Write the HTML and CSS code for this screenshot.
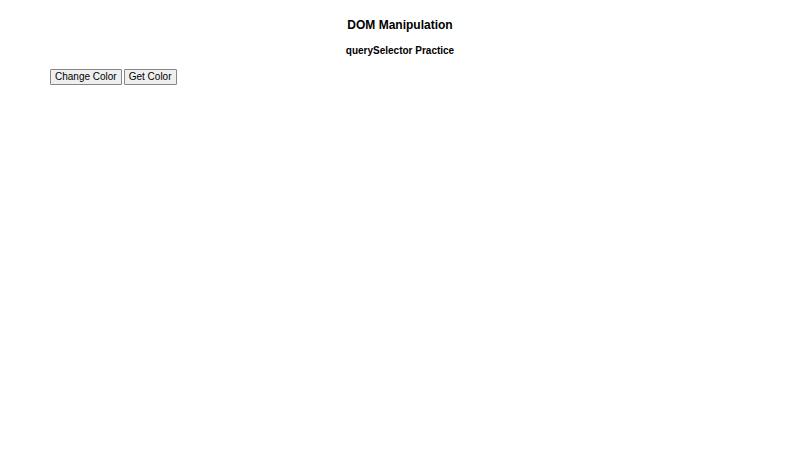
FILE: index.html
```html
<!DOCTYPE html>
<html lang="en">
<head>
    <meta charset="UTF-8">
    <meta name="viewport" content="width=device-width, initial-scale=1.0">
    <title>DOM Manipulation</title>
    <link rel="stylesheet" href="styles.css">
</head>
<body>
    <div class="container">
        <h3>DOM Manipulation</h3>
        <h4>querySelector Practice</h4>

        <div class="buttons">
            <button type="button" id="changeColor">Change Color</button>
            <button type="button" id="getColor">Get Color</button>
        </div>
    </div>

    <script>
        const heading = document.querySelector('h3');

        document.querySelector('#changeColor').addEventListener('click', () => {
            heading.style.color = 'blue';
        });

        document.querySelector('#getColor').addEventListener('click', () => {
            alert(getComputedStyle(heading).color);
        });
    </script>
</body>
</html>
```

FILE: styles.css
```css
* {
    margin: 0;
    padding: 0;
    box-sizing: border-box;
}
body {
    font-family: "Liberation Sans", Arial, sans-serif;
    font-size: 10px;
}
.container {
    margin: 15px 50px;
}
h3, h4 {
    text-align: center;
    line-height: 20px;
}
h3 {
    font-size: 12px;
}
h4 {
    margin: 6px 0 8px;
    font-size: 10px;
}
.buttons {
    display: flex;
    gap: 2px;
}
button {
    padding: 0 4px;
    font-family: inherit;
    font-size: 10px;
    line-height: 14px;
    color: #000;
    background-color: #efefef;
    border: 1px solid #858585;
    border-radius: 1px;
}
```
